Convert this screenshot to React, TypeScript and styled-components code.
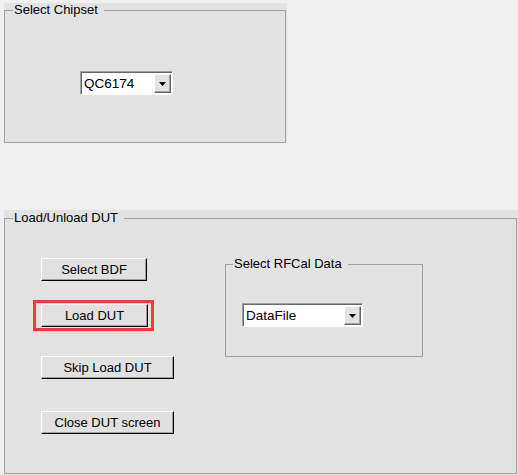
import styled, { createGlobalStyle } from 'styled-components';

const GlobalStyle = createGlobalStyle`
    body {
        margin: 0;
        background: #f0f0f0;
        font-family: "Liberation Sans", Arial, sans-serif;
        font-size: 13px;
        color: #000;
    }
`;

const Page = styled.div`
    padding: 3px 0 0 4px;
`;

const Panel = styled.div<{ $w: number; $h: number; $top?: number }>`
    box-sizing: border-box;
    width: ${p => p.$w}px;
    height: ${p => p.$h}px;
    margin-top: ${p => p.$top ?? 0}px;
    padding-top: ${p => (p.$top ? 1 : 0)}px;
    background: #e3e3e3;
`;

const Group = styled.fieldset<{ $w: number; $h: number; $pad: number }>`
    box-sizing: border-box;
    width: ${p => p.$w}px;
    height: ${p => p.$h}px;
    min-width: 0;
    margin: 0;
    padding: 0 0 0 ${p => p.$pad}px;
    border: 1px solid #a0a0a0;
`;

const Legend = styled.legend`
    padding: 0 6px 0 1px;
    font-size: 13px;
    line-height: 14px;
`;

const Combo = styled.div<{ $w: number; $top: number; $left: number }>`
    box-sizing: border-box;
    display: flex;
    width: ${p => p.$w}px;
    height: 24px;
    margin: ${p => p.$top}px 0 0 ${p => p.$left}px;
    padding: 2px 1px 1px 2px;
    background: #fff;
    border: 1px solid;
    border-color: #a0a0a0 #fff #fff #a0a0a0;
    box-shadow: inset 1px 1px #696969;
`;

const ComboText = styled.span`
    flex: 1;
    padding-left: 1px;
    font-size: 13.5px;
    line-height: 19px;
`;

const DropButton = styled.span`
    box-sizing: border-box;
    display: flex;
    align-items: center;
    justify-content: center;
    width: 17px;
    height: 19px;
    background: #e3e3e3;
    border: 1px solid;
    border-color: #fff #696969 #696969 #fff;
    box-shadow: inset -1px -1px #a0a0a0;
`;

const Body = styled.div`
    display: flex;
    align-items: flex-start;
`;

const ButtonColumn = styled.div`
    width: 184px;
    margin-left: 28px;
    padding-top: 33px;
`;

const Button = styled.button<{ $w: number; $top?: number }>`
    box-sizing: border-box;
    display: block;
    width: ${p => p.$w}px;
    height: 23px;
    margin: ${p => p.$top ?? 0}px 0 0;
    padding: 0;
    font: 13px "Liberation Sans", Arial, sans-serif;
    color: #000;
    background: #e1e1e1;
    border: 1px solid;
    border-color: #fff #000 #000 #fff;
    box-shadow: inset -1px -1px #a0a0a0;
`;

const Highlight = styled.div`
    width: fit-content;
    margin: 19px 0 0 -8px;
    padding: 1px 3px 1px 5px;
    border: 3px solid #ee3b3b;
`;

const SubGroup = styled(Group)`
    margin-top: 32px;
`;

const Arrow = () => (
    <svg width="7" height="4" viewBox="0 0 7 4">
        <path d="M0 0h7L3.5 4z" fill="#000" />
    </svg>
);

const ComboBox = (props: { value: string; w: number; top: number; left: number }) => (
    <Combo $w={props.w} $top={props.top} $left={props.left}>
        <ComboText>{props.value}</ComboText>
        <DropButton><Arrow /></DropButton>
    </Combo>
);

export default function App() {
    return (
        <Page>
            <GlobalStyle />
            <Panel $w={283} $h={140}>
                <Group $w={282} $h={140} $pad={8}>
                    <Legend>Select Chipset</Legend>
                    <ComboBox value="QC6174" w={93} top={54} left={67} />
                </Group>
            </Panel>
            <Panel $w={514} $h={265} $top={67}>
                <Group $w={513} $h={263} $pad={8}>
                    <Legend>Load/Unload DUT</Legend>
                    <Body>
                        <ButtonColumn>
                            <Button $w={106}>Select BDF</Button>
                            <Highlight>
                                <Button $w={107}>Load DUT</Button>
                            </Highlight>
                            <Button $w={133} $top={25}>Skip Load DUT</Button>
                            <Button $w={133} $top={32}>Close DUT screen</Button>
                        </ButtonColumn>
                        <SubGroup $w={198} $h={100} $pad={7}>
                            <Legend>Select RFCal Data</Legend>
                            <ComboBox value="DataFile" w={121} top={32} left={9} />
                        </SubGroup>
                    </Body>
                </Group>
            </Panel>
        </Page>
    );
}
